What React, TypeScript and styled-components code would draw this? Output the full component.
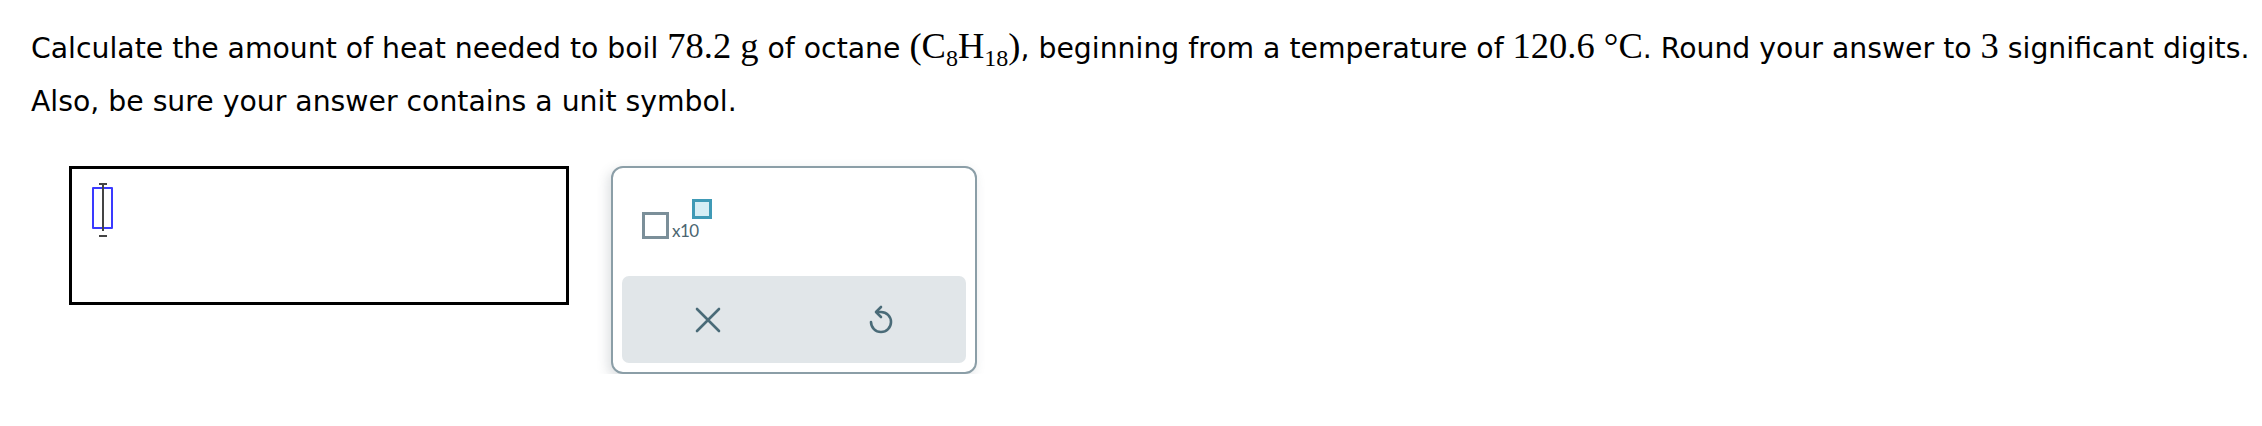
import styled, { createGlobalStyle } from 'styled-components';

const GlobalStyle = createGlobalStyle`
  html, body {
    margin: 0;
    padding: 0;
    background: #fff;
  }
`;

const Page = styled.div`
  padding: 22px 0 0 31px;
  font-family: 'DejaVu Sans', Verdana, sans-serif;
  color: #000;
`;

const Question = styled.p`
  margin: 0;
  font-size: 28.3px;
  line-height: 53px;
  white-space: nowrap;
`;

const Serif = styled.span`
  font-family: 'Liberation Serif', 'Times New Roman', serif;
  font-size: 36.5px;
  line-height: 1;
`;

const Sub = styled.sub`
  font-size: 24px;
  vertical-align: -8px;
  line-height: 0;
`;

const AnswerRow = styled.div`
  display: flex;
  align-items: flex-start;
  gap: 42px;
  margin: 38px 0 0 38px;
`;

const InputBox = styled.div`
  width: 500px;
  height: 139px;
  border: 3px solid #000;
  padding: 16px 0 0 20px;
  box-sizing: border-box;
`;

const Cursor = styled.div`
  position: relative;
  width: 21px;
  height: 42px;
  margin-top: 2px;
  border: 2px solid #3a3aff;
  box-sizing: border-box;
  border-radius: 1px;
  &::before {
    content: '';
    position: absolute;
    left: 50%;
    top: -4px;
    bottom: -4px;
    width: 2px;
    margin-left: -1px;
    background: #444;
  }
`;

const Serifs = styled.svg`
  position: absolute;
  left: 50%;
  top: -6px;
  margin-left: -5px;
`;

const Panel = styled.div`
  width: 366px;
  height: 208px;
  box-sizing: border-box;
  border: 2px solid #8b9ea7;
  border-radius: 12px;
  background: #fff;
  box-shadow: -3px 4px 12px rgba(60, 80, 90, 0.18);
  padding: 0 9px 9px 9px;
  display: flex;
  flex-direction: column;
`;

const Tools = styled.div`
  flex: 1;
  display: flex;
  align-items: flex-start;
  padding: 31px 0 0 20px;
`;

const SciButton = styled.div`
  display: flex;
  align-items: flex-start;
  position: relative;
  height: 45px;
`;

const Base = styled.div`
  width: 27px;
  height: 27px;
  margin-top: 13px;
  border: 3px solid #7b8f99;
  box-sizing: border-box;
`;

const Times = styled.span`
  font-family: 'Lato', 'Open Sans', sans-serif;
  font-size: 17px;
  color: #4b6570;
  margin-top: 21px;
  margin-left: 3px;
  letter-spacing: -0.5px;
`;

const Exponent = styled.div`
  width: 20px;
  height: 20px;
  border: 3px solid #3f9ab6;
  background: #d6eef5;
  box-sizing: border-box;
  margin-left: -7px;
`;

const ActionBar = styled.div`
  height: 87px;
  background: #e1e6e9;
  border-radius: 7px;
  display: grid;
  grid-template-columns: 1fr 1fr;
  align-items: center;
  justify-items: center;
`;

const ActionButton = styled.button`
  border: none;
  background: none;
  padding: 0;
  width: 40px;
  height: 40px;
  display: flex;
  align-items: center;
  justify-content: center;
  color: #4a6b78;
  cursor: pointer;
`;

export default function App() {
  return (
    <>
      <GlobalStyle />
      <Page>
        <Question>
          Calculate the amount of heat needed to boil <Serif>78.2 g</Serif> of octane{' '}
          <Serif>
            (C<Sub>8</Sub>H<Sub>18</Sub>)
          </Serif>
          , beginning from a temperature of <Serif>120.6 °C</Serif>. Round your answer to{' '}
          <Serif>3</Serif> significant digits.
          <br />
          Also, be sure your answer contains a unit symbol.
        </Question>
        <AnswerRow>
          <InputBox>
            <Cursor>
              <Serifs width="10" height="54" viewBox="0 0 10 54">
                <path d="M1 1h8M1 53h8" stroke="#444" strokeWidth="2" />
              </Serifs>
            </Cursor>
          </InputBox>
          <Panel>
            <Tools>
              <SciButton>
                <Base />
                <Times>x10</Times>
                <Exponent />
              </SciButton>
            </Tools>
            <ActionBar>
              <ActionButton aria-label="clear">
                <svg width="26" height="26" viewBox="0 0 26 26" fill="none">
                  <path d="M2 2L24 24M24 2L2 24" stroke="currentColor" strokeWidth="2.6" strokeLinecap="round" />
                </svg>
              </ActionButton>
              <ActionButton aria-label="undo">
                <svg width="28" height="30" viewBox="0 0 28 30" fill="none">
                  <path
                    d="M5 17a10 10 0 1 0 10-10H11"
                    stroke="currentColor"
                    strokeWidth="2.6"
                    strokeLinecap="round"
                  />
                  <path d="M15 2L10 7l5 5" stroke="currentColor" strokeWidth="2.6" strokeLinecap="round" strokeLinejoin="round" />
                </svg>
              </ActionButton>
            </ActionBar>
          </Panel>
        </AnswerRow>
      </Page>
    </>
  );
}
